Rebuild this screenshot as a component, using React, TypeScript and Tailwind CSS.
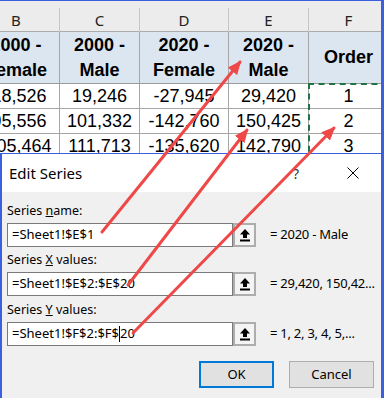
const COLS = [
  { key: "B", cls: "w-[87px]", h1: "2000 -", h2: "Female", vals: ["-18,526", "-95,556", "-105,464"] },
  { key: "C", cls: "w-[80px]", h1: "2000 -", h2: "Male", vals: ["19,246", "101,332", "111,713"] },
  { key: "D", cls: "w-[89px]", h1: "2020 -", h2: "Female", vals: ["-27,945", "-142,760", "-135,620"] },
  { key: "E", cls: "w-[80px]", h1: "2020 -", h2: "Male", vals: ["29,420", "150,425", "142,790"] },
  { key: "F", cls: "w-[80px]", h1: "Order", h2: "", vals: ["1", "2", "3"] },
];

const SHEET_FONT = "font-['Liberation_Sans',Arial,sans-serif]";
const UI_FONT = "font-['Noto_Sans','Open_Sans',sans-serif]";

function RefButton() {
  return (
    <div className="w-[23px] h-[24px] border-2 border-[#adadad] bg-[#f4f4f4] flex items-center justify-center">
      <svg width="12" height="14" viewBox="0 0 12 14">
        <path d="M6 1 L1 6.5 L4 6.5 L4 10 L8 10 L8 6.5 L11 6.5 Z" fill="#000" />
        <rect x="1" y="11.5" width="10" height="2" fill="#000" />
      </svg>
    </div>
  );
}

function RangeRow({ children, value }: { children: React.ReactNode; value: string }) {
  return (
    <div className="flex items-center">
      <div className="w-[226px] h-[24px] border border-[#7a7a7a] bg-white flex items-center px-[4px] text-[13px] text-black">
        {children}
      </div>
      <RefButton />
      <span className="ml-[14px] text-[13px] tracking-[-0.25px] text-black whitespace-nowrap">{value}</span>
    </div>
  );
}

export default function App() {
  return (
    <div className="relative w-[384px] h-[398px] overflow-hidden bg-white border-r-[3px] border-[#3c5ee0]">
      {/* sheet */}
      <div className={`relative h-[153px] overflow-hidden border-t border-[#3c5ee0] ${SHEET_FONT}`}>
        <div className="ml-[-27px] flex flex-col">
          {/* column letters */}
          <div className="flex h-[31px] bg-[#ececec] border-b border-[#ababab]">
            {COLS.map((c) => (
              <div key={c.key} className={`${c.cls} shrink-0 pt-[7px]`}>
                <div className={`h-[24px] border-r border-[#c6c6c6] flex items-center justify-center text-[15px] text-[#222] ${UI_FONT}`}>
                  {c.key}
                </div>
              </div>
            ))}
          </div>
          {/* header row */}
          <div className="flex h-[52px] bg-[#dce6f1] border-b border-[#9a9a9a]">
            {COLS.map((c) => (
              <div key={c.key} className={`${c.cls} shrink-0 border-r border-[#a6a6a6] flex flex-col items-center justify-center text-[18px] leading-[25px] font-bold text-black whitespace-nowrap`}>
                <span>{c.h1}</span>
                {c.h2 && <span>{c.h2}</span>}
              </div>
            ))}
          </div>
          {/* data rows */}
          {[0, 1, 2].map((r) => (
            <div key={r} className="flex h-[25px] border-b border-[#a6a6a6]">
              {COLS.map((c) => (
                <div key={c.key} className={`${c.cls} shrink-0 border-r border-[#a6a6a6] flex items-center justify-center text-[18px] text-black whitespace-nowrap`}>
                  {c.vals[r]}
                </div>
              ))}
            </div>
          ))}
        </div>
        {/* copy marquee */}
        <div className="absolute left-[308px] top-[82px] w-[80px] h-[100px] border-2 border-dashed border-[#217346]" />
      </div>

      {/* dialog */}
      <div className={`flex flex-col h-[245px] border-l-2 border-t border-[#3c5ee0] ${UI_FONT}`}>
        <div className="h-[38px] bg-white flex items-center pl-[7px] pr-[22px]">
          <span className="flex-1 text-[15px] text-black">Edit Series</span>
          <span className="text-[14px] text-[#333] mr-[48px]">?</span>
          <svg width="12" height="12" viewBox="0 0 12 12">
            <path d="M0.5 0.5 L11.5 11.5 M11.5 0.5 L0.5 11.5" stroke="#000" strokeWidth="1" />
          </svg>
        </div>
        <div className="flex-1 bg-[#f0f0f0] pl-[5px] flex flex-col">
          <div className="mt-[11px] h-[16px] leading-[16px] text-[12.5px] text-black">
            Series <span className="underline">n</span>ame:
          </div>
          <div className="mt-[4px]">
            <RangeRow value="= 2020 - Male">=Sheet1!$E$1</RangeRow>
          </div>
          <div className="mt-[5px] h-[16px] leading-[16px] text-[12.5px] text-black">
            Series <span className="underline">X</span> values:
          </div>
          <div className="mt-[4px]">
            <RangeRow value="= 29,420, 150,42...">=Sheet1!$E$2:$E$20</RangeRow>
          </div>
          <div className="mt-[6px] h-[16px] leading-[16px] text-[12.5px] text-black">
            Series <span className="underline">Y</span> values:
          </div>
          <div className="mt-[4px]">
            <RangeRow value="= 1, 2, 3, 4, 5,...">
              =Sheet1!$F$2:$F$
              <span className="inline-block w-px h-[16px] bg-black" />
              20
            </RangeRow>
          </div>
          <div className="mt-[15px] flex justify-end gap-[15px] pr-[7px]">
            <button className="w-[75px] h-[27px] border-2 border-[#0078d7] bg-[#e1e1e1] text-[13px] text-black">
              OK
            </button>
            <button className="w-[85px] h-[27px] border border-[#adadad] bg-[#e1e1e1] text-[13px] text-black">
              Cancel
            </button>
          </div>
        </div>
      </div>

      {/* annotation arrows */}
      <svg className="absolute inset-0 pointer-events-none" width="384" height="398">
        <defs>
          <marker id="ah" markerUnits="userSpaceOnUse" markerWidth="14" markerHeight="12" refX="12" refY="6" orient="auto">
            <path d="M0 0 L14 6 L0 12 Z" fill="#ef4848" />
          </marker>
        </defs>
        <g stroke="#ef4848" strokeWidth="3" strokeLinecap="round" markerEnd="url(#ah)">
          <line x1="102" y1="232" x2="240" y2="62" />
          <line x1="128" y1="285" x2="247" y2="130" />
          <line x1="133" y1="333" x2="334" y2="128" />
        </g>
      </svg>
    </div>
  );
}
